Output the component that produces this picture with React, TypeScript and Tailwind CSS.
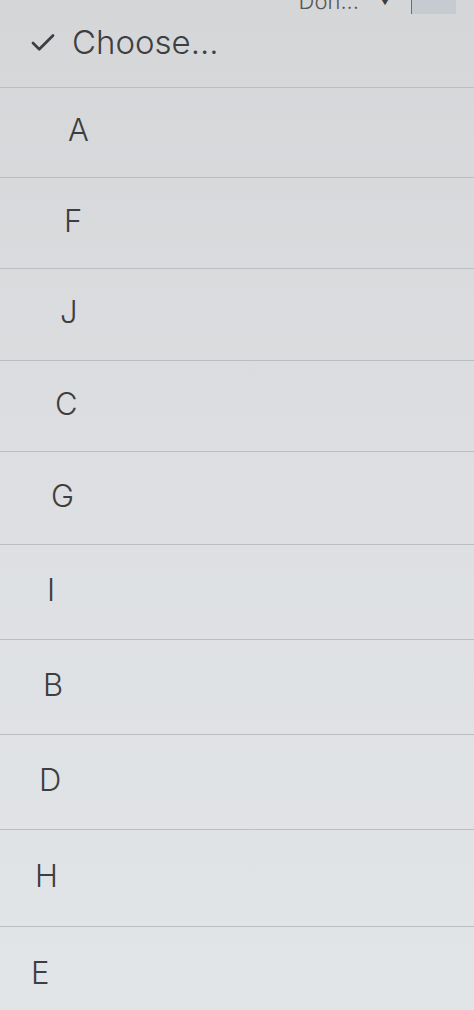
import { Check } from 'lucide-react';

interface OptionRow {
  label: string;
  rowClass: string;
}

// Option rows; the photo is taken at an angle, so labels drift left going down
const options: OptionRow[] = [
  { label: 'A', rowClass: 'h-[90px] pl-[68px]' },
  { label: 'F', rowClass: 'h-[91px] pl-[64px]' },
  { label: 'J', rowClass: 'h-[92px] pl-[60px]' },
  { label: 'C', rowClass: 'h-[91px] pl-[55px]' },
  { label: 'G', rowClass: 'h-[93px] pl-[51px]' },
  { label: 'I', rowClass: 'h-[95px] pl-[47px]' },
  { label: 'B', rowClass: 'h-[95px] pl-[43px]' },
  { label: 'D', rowClass: 'h-[95px] pl-[39px]' },
  { label: 'H', rowClass: 'h-[97px] pl-[35px]' },
  { label: 'E', rowClass: 'h-[97px] pl-[31px]' },
];

function ToolbarStrip() {
  return (
    <div className="flex h-[14px] items-start overflow-hidden">
      <div className="-mt-[14px] flex flex-1 items-center justify-end gap-5 pr-[18px]">
        <span className="text-[22px] leading-[24px] text-[#55575a]">Don...</span>
        <span className="text-[12px] leading-[24px] text-[#3c3d40]">▼</span>
        <div className="flex items-center">
          <div className="h-[30px] w-[1px] bg-[#6b6d70]" />
          <div className="h-[30px] w-[44px] bg-[#c6cbd1]" />
        </div>
      </div>
    </div>
  );
}

export default function App() {
  return (
    <div
      className="h-[1010px] w-full overflow-hidden bg-gradient-to-b from-[#d5d6d8] via-[#dddfe2] to-[#e2e5e8] font-light text-[#3d3e41]"
      style={{ fontFamily: 'Inter, "Liberation Sans", Arial, sans-serif' }}
    >
      <ToolbarStrip />
      <div className="flex h-[74px] items-center gap-[14px] border-b border-[#babdc1] pb-[16px] pl-[28px]">
        <Check className="h-[30px] w-[30px]" strokeWidth={2.2} />
        <span className="text-[33px] leading-none">Choose...</span>
      </div>
      {options.map((opt) => (
        <div
          key={opt.label}
          className={`flex items-center border-b border-[#babdc1] pb-[6px] ${opt.rowClass}`}
        >
          <span className="text-[31px] leading-none">{opt.label}</span>
        </div>
      ))}
    </div>
  );
}
